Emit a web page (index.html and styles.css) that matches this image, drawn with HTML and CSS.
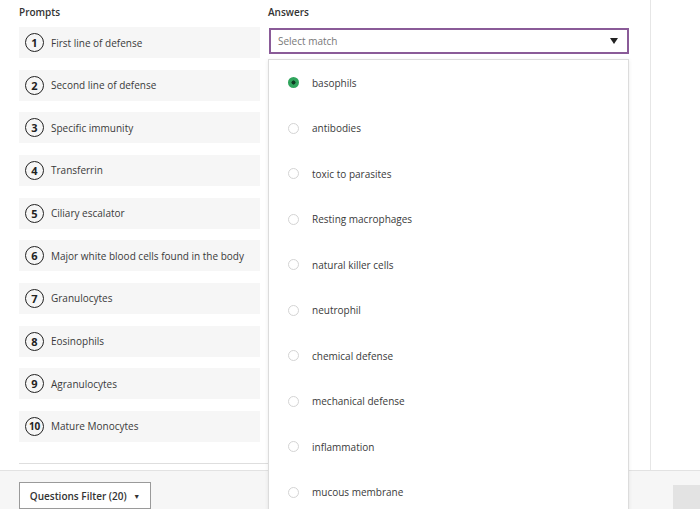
FILE: index.html
```html
<!DOCTYPE html>
<html>
<head>
<meta charset="utf-8">
<link rel="stylesheet" href="styles.css">
</head>
<body>
<div class="page">
  <div class="main">
    <div class="prompts">
      <div class="label">Prompts</div>
      <div class="list">
        <div class="row"><span class="num">1</span><span>First line of defense</span></div>
        <div class="row"><span class="num">2</span><span>Second line of defense</span></div>
        <div class="row"><span class="num">3</span><span>Specific immunity</span></div>
        <div class="row"><span class="num">4</span><span>Transferrin</span></div>
        <div class="row"><span class="num">5</span><span>Ciliary escalator</span></div>
        <div class="row"><span class="num">6</span><span>Major white blood cells found in the body</span></div>
        <div class="row"><span class="num">7</span><span>Granulocytes</span></div>
        <div class="row"><span class="num">8</span><span>Eosinophils</span></div>
        <div class="row"><span class="num">9</span><span>Agranulocytes</span></div>
        <div class="row"><span class="num num-wide">10</span><span>Mature Monocytes</span></div>
      </div>
    </div>
    <div class="answers">
      <div class="label">Answers</div>
      <div class="select">
        <span>Select match</span>
        <span class="caret"></span>
      </div>
    </div>
  </div>
  <div class="footer">
    <button class="filter">Questions Filter (20) <span class="small-caret">&#9660;</span></button>
    <div class="corner"></div>
  </div>
  <div class="menu">
    <div class="opt"><span class="radio on"></span><span>basophils</span></div>
    <div class="opt"><span class="radio"></span><span>antibodies</span></div>
    <div class="opt"><span class="radio"></span><span>toxic to parasites</span></div>
    <div class="opt"><span class="radio"></span><span>Resting macrophages</span></div>
    <div class="opt"><span class="radio"></span><span>natural killer cells</span></div>
    <div class="opt"><span class="radio"></span><span>neutrophil</span></div>
    <div class="opt"><span class="radio"></span><span>chemical defense</span></div>
    <div class="opt"><span class="radio"></span><span>mechanical defense</span></div>
    <div class="opt"><span class="radio"></span><span>inflammation</span></div>
    <div class="opt"><span class="radio"></span><span>mucous membrane</span></div>
  </div>
</div>
</body>
</html>
```
FILE: styles.css
```css
* { box-sizing: border-box; }
html, body { margin: 0; padding: 0; background: #fff; }
body {
  font-family: "Open Sans", "Liberation Sans", sans-serif;
  font-size: 10px;
  color: #333;
}
.page {
  position: relative;
  width: 700px;
  height: 509px;
  overflow: hidden;
}
.main {
  display: flex;
  height: 470px;
  padding-left: 19px;
}
.prompts {
  width: 249px;
  height: 464px;
  border-bottom: 1px solid #dedede;
}
.label {
  font-weight: 600;
  font-size: 10px;
  line-height: 14px;
  padding-top: 5px;
  color: #333;
}
.list {
  margin-top: 8px;
  width: 241px;
  display: flex;
  flex-direction: column;
  gap: 11.67px;
}
.row {
  height: 31px;
  background: #f6f6f6;
  display: flex;
  align-items: center;
  padding-left: 6px;
  gap: 7px;
  color: #3a3a3a;
  white-space: nowrap;
}
.num {
  width: 19px;
  height: 19px;
  border: 1.8px solid #222;
  border-radius: 50%;
  display: flex;
  align-items: center;
  justify-content: center;
  font-weight: 700;
  font-size: 11px;
  color: #222;
  flex: none;
}
.num-wide { font-size: 10px; letter-spacing: -0.3px; }
.answers {
  width: 383px;
  border-right: 1px solid #e6e6e6;
}
.select {
  margin-top: 9px;
  margin-left: 1px;
  width: 360px;
  height: 26px;
  border: 2px solid #8a5b98;
  display: flex;
  align-items: center;
  justify-content: space-between;
  padding: 0 9px 0 7px;
  color: #777;
}
.caret {
  width: 0;
  height: 0;
  border-left: 4.5px solid transparent;
  border-right: 4.5px solid transparent;
  border-top: 6px solid #222;
}
.footer {
  height: 39px;
  background: #f6f6f6;
  border-top: 1px solid #e2e2e2;
  display: flex;
  justify-content: space-between;
  align-items: flex-start;
  padding-left: 19px;
}
.filter {
  margin-top: 11px;
  width: 132px;
  height: 27px;
  background: #fff;
  border: 1px solid #9a9a9a;
  border-radius: 0;
  font-family: "Open Sans", "Liberation Sans", sans-serif;
  font-size: 10px;
  font-weight: 600;
  color: #333;
  padding: 0;
}
.small-caret { font-size: 7px; margin-left: 4px; vertical-align: 1px; }
.corner {
  margin-top: 14px;
  width: 27px;
  height: 30px;
  background: #e3e3e3;
}
.menu {
  position: absolute;
  left: 268px;
  top: 59px;
  width: 361px;
  height: 470px;
  background: #fff;
  border: 1px solid #dcdcdc;
  box-shadow: 0 1px 4px rgba(0,0,0,0.08);
}
.opt {
  height: 45.5px;
  display: flex;
  align-items: center;
  padding-left: 19px;
  gap: 13px;
  color: #3a3a3a;
}
.radio {
  width: 11px;
  height: 11px;
  border-radius: 50%;
  border: 1px solid #d4d4d4;
  background: #fff;
  flex: none;
}
.radio.on {
  border: none;
  background: radial-gradient(circle, #0e3b22 0 1.8px, #2fa45c 2.3px);
}
```
